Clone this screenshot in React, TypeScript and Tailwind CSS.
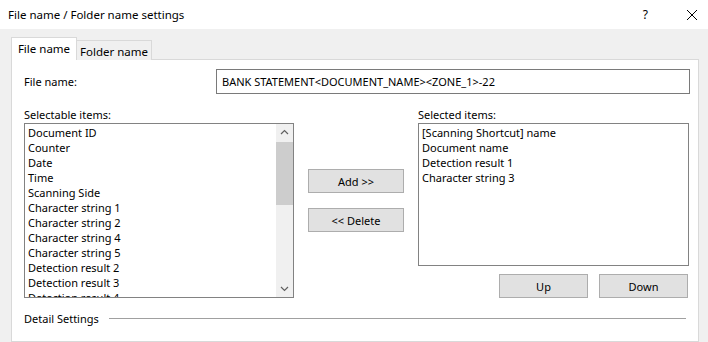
import React from "react";

const font = { fontFamily: '"Segoe UI", "Noto Sans", "Open Sans", sans-serif' };

const selectable = [
  "Document ID",
  "Counter",
  "Date",
  "Time",
  "Scanning Side",
  "Character string 1",
  "Character string 2",
  "Character string 4",
  "Character string 5",
  "Detection result 2",
  "Detection result 3",
  "Detection result 4",
];

const selected = [
  "[Scanning Shortcut] name",
  "Document name",
  "Detection result 1",
  "Character string 3",
];

const Btn = ({ label, w }: { label: string; w: string }) => (
  <button
    className={`${w} h-[24px] bg-[#e1e1e1] border border-[#adadad] text-[11px] text-black leading-none`}
  >
    {label}
  </button>
);

export default function App() {
  return (
    <div
      className="w-[708px] h-[342px] overflow-hidden bg-[#f0f0f0] flex flex-col text-[11px] leading-[15px] text-black"
      style={font}
    >
      {/* title bar */}
      <div className="h-[29px] bg-white flex items-center shrink-0">
        <span className="pl-[8px] text-[11.5px] -mt-[1px]">File name / Folder name settings</span>
        <div className="ml-auto flex items-center">
          <span className="text-[12px] mr-[38px]">?</span>
          <svg width="12" height="12" viewBox="0 0 12 12" className="mr-[10px]">
            <path d="M1 1 L11 11 M11 1 L1 11" stroke="#000" strokeWidth="1" />
          </svg>
        </div>
      </div>

      {/* body */}
      <div className="flex-1 pl-[11px] pr-[9px] pt-[9px] flex flex-col">
        {/* tabs */}
        <div className="flex items-end h-[22px] relative z-10 -mb-[1px]">
          <div className="h-[23px] w-[66px] bg-white border border-[#d9d9d9] border-b-0 flex items-center justify-center pb-[1px] text-[11.5px]">
            File name
          </div>
          <div className="h-[20px] w-[75px] bg-[#f0f0f0] border border-[#d9d9d9] border-l-0 border-b-0 flex items-center justify-center pt-[1px] text-[11.5px]">
            Folder name
          </div>
        </div>

        {/* panel */}
        <div className="flex-1 bg-white border border-[#d9d9d9] pl-[12px] pr-[9px] pt-[9px]">
          <div className="flex items-center h-[25px]">
            <span className="w-[192px]">File name:</span>
            <div className="flex-1 h-[25px] border border-[#7a7a7a] flex items-center pl-[5px] -mr-[1px]">
              BANK STATEMENT&lt;DOCUMENT_NAME&gt;&lt;ZONE_1&gt;-22
            </div>
          </div>

          <div className="flex mt-[13px]">
            {/* left list */}
            <div className="w-[270px] flex flex-col">
              <span className="h-[16px] leading-[15px]">Selectable items:</span>
              <div className="h-[175px] border border-[#828282] flex overflow-hidden">
                <div className="flex-1 pl-[3px] pt-[1px] overflow-hidden">
                  {selectable.map((s) => (
                    <div key={s} className="whitespace-nowrap h-[15px]">
                      {s}
                    </div>
                  ))}
                </div>
                <div className="w-[17px] bg-[#f0f0f0] flex flex-col items-center">
                  <svg width="9" height="17" viewBox="0 0 9 17" className="shrink-0">
                    <path d="M1 10 L4.5 6.5 L8 10" stroke="#606060" strokeWidth="1.2" fill="none" />
                  </svg>
                  <div className="w-[17px] h-[63px] bg-[#cdcdcd] mt-[1px]" />
                  <div className="flex-1" />
                  <svg width="9" height="17" viewBox="0 0 9 17" className="shrink-0">
                    <path d="M1 7 L4.5 10.5 L8 7" stroke="#606060" strokeWidth="1.2" fill="none" />
                  </svg>
                </div>
              </div>
            </div>

            {/* middle buttons */}
            <div className="w-[96px] ml-[14px] flex flex-col pt-[62px] gap-[15px]">
              <Btn label="Add >>" w="w-[96px]" />
              <Btn label="<< Delete" w="w-[96px]" />
            </div>

            {/* right list */}
            <div className="w-[271px] ml-[14px] flex flex-col">
              <span className="h-[16px] leading-[15px]">Selected items:</span>
              <div className="h-[143px] border border-[#828282] pl-[3px] pt-[1px]">
                {selected.map((s) => (
                  <div key={s} className="whitespace-nowrap h-[15px]">
                    {s}
                  </div>
                ))}
              </div>
              <div className="flex justify-end gap-[11px] mt-[8px] pr-[1px]">
                <Btn label="Up" w="w-[89px]" />
                <Btn label="Down" w="w-[89px]" />
              </div>
            </div>
          </div>

          {/* detail settings */}
          <div className="flex items-center mt-[12px] h-[16px]">
            <span>Detail Settings</span>
            <div className="flex-1 h-px bg-[#a0a0a0] ml-[10px] mr-[3px]" />
          </div>
        </div>
      </div>
    </div>
  );
}
